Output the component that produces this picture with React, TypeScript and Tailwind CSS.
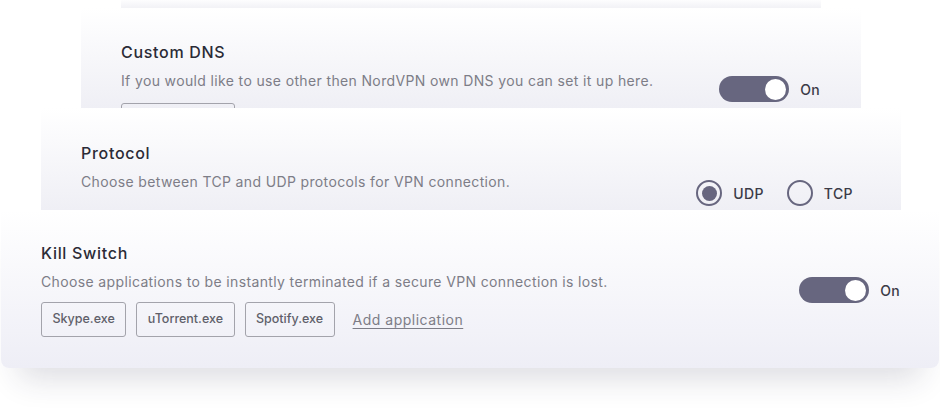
import React from "react";

const font = { fontFamily: "Inter, 'Noto Sans', sans-serif" };

function Toggle() {
  return (
    <div className="flex items-center gap-[11px]">
      <div className="relative h-[26px] w-[70px] rounded-full bg-[#67667f]">
        <div className="absolute right-[3px] top-[2.5px] h-[21px] w-[21px] rounded-full bg-white" />
      </div>
      <span className="text-[14px] font-medium tracking-[0.3px] text-[#3b3b47]">On</span>
    </div>
  );
}

function Radio({ checked, label }: { checked?: boolean; label: string }) {
  return (
    <div className="flex items-center gap-[11px]">
      <div className="flex h-[26px] w-[26px] items-center justify-center rounded-full border-2 border-[#67667f]">
        {checked && <div className="h-[15px] w-[15px] rounded-full bg-[#67667f]" />}
      </div>
      <span className="text-[14px] font-medium tracking-[0.4px] text-[#3b3b47]">{label}</span>
    </div>
  );
}

function Chip({ label }: { label: string }) {
  return (
    <div className="flex h-[35px] items-center rounded-[3px] border border-[#a3a3ab] px-[10.5px] text-[12.5px] font-medium text-[#5f5f6a]">
      {label}
    </div>
  );
}

export default function App() {
  return (
    <div className="h-[410px] w-[940px] overflow-hidden bg-white" style={font}>
      <div className="ml-[121px] mr-[119px] h-[8px] bg-gradient-to-b from-[#fdfdfe] to-[#f2f2f6]" />

      <div className="relative z-10 ml-[81px] mr-[79px] flex h-[100px] overflow-hidden bg-gradient-to-b from-white to-[#efeff5] pl-[40px] pr-[41px]">
        <div className="flex-1 pt-[34px]">
          <div className="text-[16px] font-medium leading-[20px] tracking-[0.7px] text-[#2b2b36]">Custom DNS</div>
          <div className="mt-[9px] text-[14px] leading-[20px] tracking-[0.36px] text-[#7d7d87]">
            If you would like to use other then NordVPN own DNS you can set it up here.
          </div>
          <div className="mt-[12px] h-[34px] w-[114px] rounded-[3px] border border-[#a3a3ab]" />
        </div>
        <div className="pt-[68px]">
          <Toggle />
        </div>
      </div>

      <div className="relative z-20 ml-[41px] mr-[39px] flex h-[102px] bg-gradient-to-b from-white to-[#efeff5] pl-[40px] pr-[48px]">
        <div className="flex-1 pt-[35px]">
          <div className="text-[16px] font-medium leading-[20px] tracking-[0.7px] text-[#2b2b36]">Protocol</div>
          <div className="mt-[9px] text-[14px] leading-[20px] tracking-[0.36px] text-[#7d7d87]">
            Choose between TCP and UDP protocols for VPN connection.
          </div>
        </div>
        <div className="flex gap-[23px] pt-[68px]">
          <Radio checked label="UDP" />
          <Radio label="TCP" />
        </div>
      </div>

      <div className="relative z-30 mx-[1px] flex h-[158px] rounded-b-[8px] bg-gradient-to-b from-white to-[#eeeef6] pl-[40px] pr-[39px] shadow-[0_28px_30px_-18px_rgba(40,40,70,0.16)]">
        <div className="flex-1 pt-[33px]">
          <div className="text-[16px] font-medium leading-[20px] tracking-[0.7px] text-[#2b2b36]">Kill Switch</div>
          <div className="mt-[9px] text-[14px] leading-[20px] tracking-[0.36px] text-[#7d7d87]">
            Choose applications to be instantly terminated if a secure VPN connection is lost.
          </div>
          <div className="mt-[10px] flex items-center gap-[10px]">
            <Chip label="Skype.exe" />
            <Chip label="uTorrent.exe" />
            <Chip label="Spotify.exe" />
            <span className="ml-[8px] text-[14px] tracking-[0.5px] text-[#7d7d87] underline underline-offset-[3px]">
              Add application
            </span>
          </div>
        </div>
        <div className="pt-[67px]">
          <Toggle />
        </div>
      </div>
    </div>
  );
}
